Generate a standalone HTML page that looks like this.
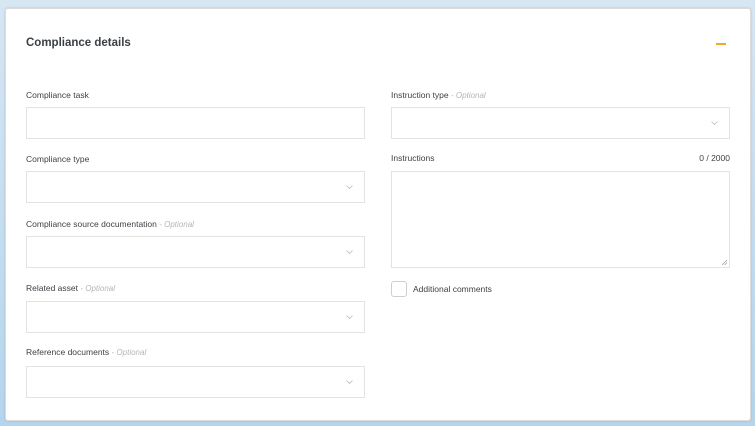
<!DOCTYPE html>
<html><head><meta charset="utf-8"><style>
*{box-sizing:border-box;margin:0;padding:0}
html,body{width:755px;height:426px;overflow:hidden}
body{background:linear-gradient(#d7e6f3,#b5d5ec);font-family:"Liberation Sans",sans-serif;position:relative}
.card{position:absolute;left:5px;top:8px;width:746px;height:413px;background:#fff;border:1px solid #dcdcdc;border-radius:3px;box-shadow:0 0 2px rgba(0,0,0,.15)}
.t{position:absolute;left:26px;top:37px;font-size:11.5px;font-weight:bold;color:#3a3f44}
.dash{position:absolute;left:716px;top:43px;width:10px;height:1.5px;background:#f0a830}
.l{position:absolute;font-size:8.5px;color:#3d4247}
.l i{color:#b5b5b5;font-size:8px}
.b{position:absolute;border:1px solid #e3e3e3;background:#fff}
.b svg{position:absolute;right:11px;top:50%;margin-top:-2px}
.cb{position:absolute;left:391px;top:281px;width:16px;height:16px;border:1px solid #cfcfcf;border-radius:3px}
</style></head><body>
<div class="card"></div>
<div class="t">Compliance details</div>
<div class="dash"></div>

<div class="l" style="left:26px;top:90px">Compliance task</div>
<div class="b" style="left:26px;top:107px;width:339px;height:32px"></div>
<div class="l" style="left:26px;top:154px">Compliance type</div>
<div class="b" style="left:26px;top:171px;width:339px;height:32px"><svg width="7" height="4"><path d="M.5 .5L3.5 3.5L6.5 .5" stroke="#bbb" fill="none" stroke-width=".8"/></svg></div>
<div class="l" style="left:26px;top:219px">Compliance source documentation <i>- Optional</i></div>
<div class="b" style="left:26px;top:236px;width:339px;height:32px"><svg width="7" height="4"><path d="M.5 .5L3.5 3.5L6.5 .5" stroke="#bbb" fill="none" stroke-width=".8"/></svg></div>
<div class="l" style="left:26px;top:283px">Related asset <i>- Optional</i></div>
<div class="b" style="left:26px;top:301px;width:339px;height:32px"><svg width="7" height="4"><path d="M.5 .5L3.5 3.5L6.5 .5" stroke="#bbb" fill="none" stroke-width=".8"/></svg></div>
<div class="l" style="left:26px;top:347px">Reference documents <i>- Optional</i></div>
<div class="b" style="left:26px;top:366px;width:339px;height:32px"><svg width="7" height="4"><path d="M.5 .5L3.5 3.5L6.5 .5" stroke="#bbb" fill="none" stroke-width=".8"/></svg></div>

<div class="l" style="left:391px;top:90px">Instruction type <i>- Optional</i></div>
<div class="b" style="left:391px;top:107px;width:339px;height:32px"><svg width="7" height="4"><path d="M.5 .5L3.5 3.5L6.5 .5" stroke="#bbb" fill="none" stroke-width=".8"/></svg></div>
<div class="l" style="left:391px;top:153px">Instructions</div>
<div class="l" style="left:690px;top:153px;width:40px;text-align:right">0 / 2000</div>
<div class="b" style="left:391px;top:171px;width:339px;height:97px"><svg style="position:absolute;right:2px;bottom:2px;top:auto;margin:0" width="6" height="6"><path d="M1 6L6 1M3.5 6L6 3.5" stroke="#999" stroke-width=".7"/></svg></div>
<div class="cb"></div>
<div class="l" style="left:413px;top:284px">Additional comments</div>
</body></html>
